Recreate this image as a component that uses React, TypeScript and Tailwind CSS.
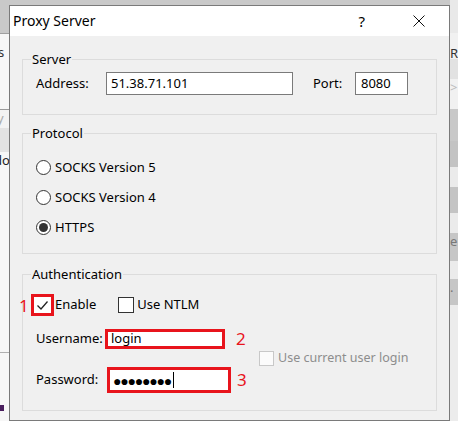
import React from "react"

const font = { fontFamily: '"Noto Sans", "Open Sans", sans-serif' }

const Check = () => (
  <svg width="13" height="11" viewBox="0 0 13 11" fill="none">
    <path d="M1.5 5.5 L5 9 L11.5 1.5" stroke="#222" strokeWidth="1.3" />
  </svg>
)

const Radio = ({ checked, label }: { checked?: boolean; label: string }) => (
  <div className="flex h-[30px] items-center">
    <div className="flex h-[15px] w-[15px] items-center justify-center rounded-full border border-[#333] bg-white">
      {checked && <div className="h-[9px] w-[9px] rounded-full bg-[#333]" />}
    </div>
    <span className="ml-[4px] text-[13px] leading-4 text-black">{label}</span>
  </div>
)

const Group = ({ title, className, children }: { title: string; className?: string; children: React.ReactNode }) => (
  <fieldset className={`border border-[#dcdcdc] pl-[13px] ${className ?? ""}`}>
    <legend className="-ml-[5px] px-[1px] text-[13px] leading-4 text-black">{title}</legend>
    {children}
  </fieldset>
)

export default function App() {
  return (
    <div className="flex h-[421px] w-[458px] overflow-hidden bg-[#c9c9c9]" style={font}>
      {/* window behind, left */}
      <div className="flex w-[9px] shrink-0 flex-col overflow-hidden pt-[33px]">
        <div className="h-px bg-[#a0a0a0]" />
        <div className="h-[75px] bg-[#f7f7f7] pt-[10px] text-[13px] leading-4 text-[#333]">
          <span className="-ml-[2px]">s</span>
        </div>
        <div className="h-px bg-[#9a9a9a]" />
        <div className="h-[18px] bg-[#f3f3f3] text-[13px] leading-4 text-[#aaa]">
          <span className="-ml-[3px]">y</span>
        </div>
        <div className="h-[24px] bg-[#e3e3e3]" />
        <div className="h-[200px] bg-[#f7f7f7] text-[13px] leading-4 text-[#222]">
          <span className="-ml-[6px]">do</span>
        </div>
        <div className="h-px bg-[#b0b0b0]" />
        <div className="flex flex-1 items-start bg-[#f7f7f7] pt-[52px]">
          <div className="h-[6px] w-[4px] bg-[#4a1f5e]" />
        </div>
      </div>

      {/* dialog */}
      <div className="mt-[5px] flex w-[441px] shrink-0 flex-col border border-[#7a7a7a] bg-[#f0f0f0]">
        <div className="flex h-[30px] items-center bg-white pl-[3px]">
          <span className="text-[14px] leading-5 text-black">Proxy Server</span>
          <span className="ml-auto mr-[48px] text-[15px] leading-5 text-black">?</span>
          <svg className="mr-[24px]" width="12" height="12" viewBox="0 0 12 12">
            <path d="M0.5 0.5 L11.5 11.5 M11.5 0.5 L0.5 11.5" stroke="#111" strokeWidth="1" />
          </svg>
        </div>

        <div className="flex flex-col px-[12px] pt-[15px]">
          <Group title="Server" className="pb-[19px]">
            <div className="mt-[5px] flex h-[23px] items-center text-[13px] text-black">
              <span className="w-[70px]">Address:</span>
              <div className="flex h-[23px] w-[187px] items-center border border-[#7a7a7a] bg-white pl-[4px]">
                51.38.71.101
              </div>
              <span className="ml-[20px] w-[42px]">Port:</span>
              <div className="flex h-[23px] w-[53px] items-center border border-[#7a7a7a] bg-white pl-[5px]">
                8080
              </div>
            </div>
          </Group>

          <Group title="Protocol" className="mt-[10px] pb-[11px]">
            <div className="mt-[11px] flex flex-col">
              <Radio label="SOCKS Version 5" />
              <Radio label="SOCKS Version 4" />
              <Radio checked label="HTTPS" />
            </div>
          </Group>

          <Group title="Authentication" className="mt-[12px] pb-[17px]">
            <div className="relative mt-[12px] flex h-[22px] items-center text-[13px] text-black">
              <span className="absolute -left-[17px] top-[2px] text-[17px] leading-5 text-[#e8141c]">1</span>
              <div className="-ml-[5px] flex h-[22px] w-[23px] items-center justify-center border-[3px] border-[#e8141c] bg-white">
                <Check />
              </div>
              <span className="ml-[1px]">Enable</span>
              <div className="ml-[22px] h-[16px] w-[16px] border border-[#333] bg-white" />
              <span className="ml-[3px]">Use NTLM</span>
            </div>

            <div className="mt-[13px] flex h-[20px] items-center text-[13px] text-black">
              <span className="w-[69px]">Username:</span>
              <div className="flex h-[20px] w-[120px] items-center border-[3px] border-[#e8141c] bg-white pl-[3px]">
                login
              </div>
              <span className="ml-[11px] text-[17px] leading-5 text-[#e8141c]">2</span>
            </div>

            <div className="mt-[2px] flex h-[15px] items-center pl-[223px] text-[12.5px] text-[#8d8d8d]">
              <div className="h-[15px] w-[15px] border border-[#c8c8c8] bg-[#fbfbfb]" />
              <span className="ml-[4px]">Use current user login</span>
            </div>

            <div className="mt-[1px] flex h-[26px] items-center text-[13px] text-black">
              <span className="w-[71px]">Password:</span>
              <div className="flex h-[26px] w-[124px] items-center border-[3px] border-[#e8141c] bg-white pl-[3px]">
                <span className="text-[14px] tracking-[-1.2px]">●●●●●●●●</span>
                <div className="ml-[2px] h-[16px] w-px bg-black" />
              </div>
              <span className="ml-[6px] text-[17px] leading-5 text-[#e8141c]">3</span>
            </div>
          </Group>
        </div>
      </div>

      {/* window behind, right */}
      <div className="flex flex-1 flex-col overflow-hidden bg-[#e9e9e9] pt-[33px] text-[13px] leading-4">
        <div className="h-[12px] bg-[#f1f1f1]" />
        <div className="h-[14px] bg-[#f1f1f1] text-[#333]">Re</div>
        <div className="h-[20px] bg-[#e2e2e2]" />
        <div className="h-[30px] bg-[#f1f1f1] text-[#bbb]">&gt;</div>
        <div className="h-[32px] bg-[#c8c8c8]" />
        <div className="h-[26px] bg-[#c3c3c3]" />
        <div className="h-[20px] bg-[#ebebeb]" />
        <div className="h-[26px] bg-[#c4c4c4]" />
        <div className="h-[20px] bg-[#ebebeb]" />
        <div className="h-[28px] bg-[#c6c6c6] text-[#777]">e</div>
        <div className="h-[18px] bg-[#ebebeb]" />
        <div className="h-[26px] bg-[#c6c6c6] text-[#777]">.</div>
        <div className="flex-1 bg-[#ececec]" />
      </div>
    </div>
  )
}
